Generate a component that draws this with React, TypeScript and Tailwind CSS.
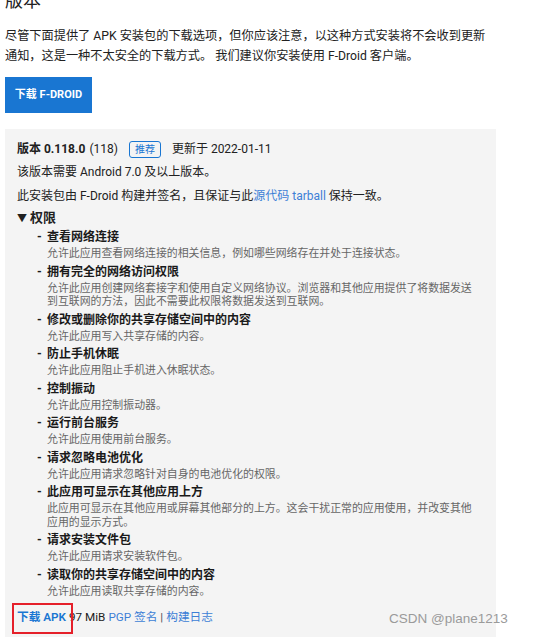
const permissions = [
  { title: '查看网络连接', desc: ['允许此应用查看网络连接的相关信息，例如哪些网络存在并处于连接状态。'] },
  {
    title: '拥有完全的网络访问权限',
    desc: [
      '允许此应用创建网络套接字和使用自定义网络协议。浏览器和其他应用提供了将数据发送',
      '到互联网的方法，因此不需要此权限将数据发送到互联网。',
    ],
  },
  { title: '修改或删除你的共享存储空间中的内容', desc: ['允许此应用写入共享存储的内容。'] },
  { title: '防止手机休眠', desc: ['允许此应用阻止手机进入休眠状态。'] },
  { title: '控制振动', desc: ['允许此应用控制振动器。'] },
  { title: '运行前台服务', desc: ['允许此应用使用前台服务。'] },
  { title: '请求忽略电池优化', desc: ['允许此应用请求忽略针对自身的电池优化的权限。'] },
  {
    title: '此应用可显示在其他应用上方',
    desc: [
      '此应用可显示在其他应用或屏幕其他部分的上方。这会干扰正常的应用使用，并改变其他',
      '应用的显示方式。',
    ],
  },
  { title: '请求安装文件包', desc: ['允许此应用请求安装软件包。'] },
  { title: '读取你的共享存储空间中的内容', desc: ['允许此应用读取共享存储的内容。'] },
]

export default function App() {
  return (
    <div
      className="relative h-[637px] overflow-hidden bg-white px-[5px] text-[#212121]"
      style={{ fontFamily: 'Roboto, "Noto Sans CJK SC", sans-serif' }}
    >
      {/* Heading (cut at the top) */}
      <h2 className="mt-[-8px] text-[18px] leading-[18px]">版本</h2>

      <p className="mt-[16px] whitespace-nowrap text-[12.2px] leading-[20px]">
        尽管下面提供了 APK 安装包的下载选项，但你应该注意，以这种方式安装将不会收到更新
        <br />
        通知，这是一种不太安全的下载方式。 我们建议你安装使用 F-Droid 客户端。
      </p>

      <button className="mt-[11px] flex h-[36px] w-[87px] items-center justify-center bg-[#1976d2] text-[11px] font-bold text-white">
        下载 F-DROID
      </button>

      {/* Version card */}
      <div className="mt-[16px] w-[491px] bg-[#f4f4f4] pb-[20px] pl-[12px] pt-[10px] text-[12px]">
        <div className="flex h-[20px] items-center whitespace-nowrap">
          <span className="font-bold">版本 0.118.0</span>
          <span className="ml-[4px]">(118)</span>
          <span className="ml-[11px] flex h-[17px] w-[32px] items-center justify-center rounded-[3px] border-[1.5px] border-[#1976d2] text-[10px] text-[#1976d2]">
            推荐
          </span>
          <span className="ml-[11px]">更新于 2022-01-11</span>
        </div>
        <p className="mt-[3px] leading-[20px]">该版本需要 Android 7.0 及以上版本。</p>
        <p className="mt-[4px] leading-[20px]">
          此安装包由 F-Droid 构建并签名，且保证与此<span className="text-[#3d7fd6]">源代码 tarball</span> 保持一致。
        </p>
        <div className="mt-[2px] flex h-[20px] items-center text-[13px] font-bold">
          <span className="text-[10px]">▼</span>
          <span className="ml-[3px]">权限</span>
        </div>

        <ul className="mt-[1px] flex flex-col gap-[3px] pl-[20px]">
          {permissions.map(p => (
            <li key={p.title}>
              <div className="flex h-[16px] items-center whitespace-nowrap text-[12px] font-bold text-[#1a1a1a]">
                <span className="w-[10px]">-</span>
                {p.title}
              </div>
              <div className="mt-[2px] pl-[10px] text-[10.9px] leading-[13.5px] text-[#666]">
                {p.desc.map(line => (
                  <div key={line} className="whitespace-nowrap">{line}</div>
                ))}
              </div>
            </li>
          ))}
        </ul>

        <div className="mt-[10px] flex h-[20px] items-center whitespace-nowrap text-[11.7px]">
          <span className="relative font-semibold text-[#1976d2]">
            下载 APK
            <span className="absolute -bottom-[7px] -left-[5px] -right-[7px] -top-[6px] border-2 border-[#e5202a]" />
          </span>
          <span className="ml-[3px]">97 MiB</span>
          <span className="ml-[3px] text-[#3d7fd6]">PGP 签名</span>
          <span className="mx-[3px] text-[#555]">|</span>
          <span className="text-[#3d7fd6]">构建日志</span>
        </div>
      </div>

      {/* watermark */}
      <div
        className="absolute left-[389px] top-[609px] text-[13.5px] text-[#9a9a9a]"
        style={{ fontFamily: '"Liberation Sans", Arial, sans-serif' }}
      >
        CSDN @plane1213
      </div>
    </div>
  )
}
